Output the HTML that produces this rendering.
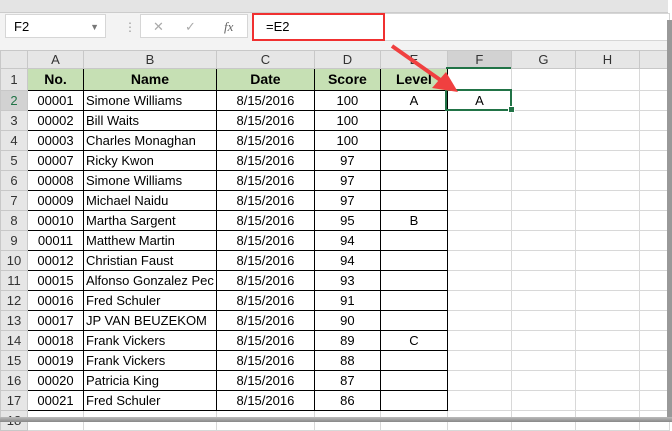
<!DOCTYPE html><html><head><style>
body{margin:0;width:672px;height:422px;overflow:hidden;background:#fff;font-family:"Liberation Sans",Arial,sans-serif;position:relative}
.top{position:absolute;left:0;top:0;width:668px;height:50px;background:#f3f3f3;border-bottom:1px solid #d0d0d0}
.strip{position:absolute;left:0;top:0;width:668px;height:12px;background:#e4e4e4;border-bottom:1px solid #ccc}
.box{position:absolute;background:#fff;border:1px solid #d6d6d6;font-size:13px}
table{position:absolute;left:0;top:50px;border-collapse:collapse;table-layout:fixed}
td{height:19px;border:1px solid #d8d8d8;font-size:13px;padding:0 2px;white-space:nowrap;overflow:hidden;text-align:center;line-height:19px}
tr.h td{height:17px;line-height:17px;background:#e6e6e6;color:#333;border-color:#c8c8c8}
tr.g td{height:21px;line-height:21px}
td.rh{background:#e6e6e6;color:#333;border-color:#c8c8c8;font-size:13px}
.g td.t{background:#c6e0b4;font-weight:bold;font-size:14px}
td.t{border:1px solid #000}
td.l{text-align:left}
.shadow{position:absolute;left:0;top:417px;width:672px;height:5px;background:linear-gradient(#bbb,#888)}
.rshadow{position:absolute;left:667px;top:20px;width:5px;height:402px;background:#999}
</style></head><body>
<div class="top"><div class="strip"></div>
<div class="box" style="left:5px;top:14px;width:101px;height:24px;line-height:24px;padding-left:8px;box-sizing:border-box">F2<span style="position:absolute;right:6px;top:0;font-size:9px;color:#777">▼</span></div>
<div style="position:absolute;left:124px;top:20px;color:#999;font-size:12px">⋮</div>
<div class="box" style="left:140px;top:14px;width:108px;height:24px;color:#aaa;line-height:24px;box-sizing:border-box"><span style="position:absolute;left:12px">✕</span><span style="position:absolute;left:44px">✓</span><span style="position:absolute;left:83px;font-style:italic;font-family:'Liberation Serif',serif;color:#666">fx</span></div>
<div class="box" style="left:252px;top:13px;width:416px;height:26px;border-color:#d6d6d6"></div>
<div style="position:absolute;left:252px;top:13px;height:24px;border:2px solid #f03030;font-size:13px;line-height:24px;padding-left:12px;width:117px">=E2</div>
</div>
<table>
<colgroup><col style="width:27px"><col style="width:56px"><col style="width:132px"><col style="width:98px"><col style="width:66px"><col style="width:67px"><col style="width:64px"><col style="width:64px"><col style="width:64px"><col style="width:30px"></colgroup>
<tr class="h"><td style="background:#e6e6e6"></td><td>A</td><td>B</td><td>C</td><td>D</td><td>E</td><td style="background:#d2d2d2">F</td><td>G</td><td>H</td><td></td></tr>
<tr class="g"><td class="rh">1</td><td class="t">No.</td><td class="t">Name</td><td class="t">Date</td><td class="t">Score</td><td class="t">Level</td><td></td><td></td><td></td><td></td></tr>
<tr><td class="rh" style="color:#217346;background:#d2d2d2">2</td><td class="t">00001</td><td class="t l">Simone Williams</td><td class="t">8/15/2016</td><td class="t">100</td><td class="t">A</td><td>A</td><td></td><td></td><td></td></tr>
<tr><td class="rh">3</td><td class="t">00002</td><td class="t l">Bill Waits</td><td class="t">8/15/2016</td><td class="t">100</td><td class="t"></td><td></td><td></td><td></td><td></td></tr>
<tr><td class="rh">4</td><td class="t">00003</td><td class="t l">Charles Monaghan</td><td class="t">8/15/2016</td><td class="t">100</td><td class="t"></td><td></td><td></td><td></td><td></td></tr>
<tr><td class="rh">5</td><td class="t">00007</td><td class="t l">Ricky Kwon</td><td class="t">8/15/2016</td><td class="t">97</td><td class="t"></td><td></td><td></td><td></td><td></td></tr>
<tr><td class="rh">6</td><td class="t">00008</td><td class="t l">Simone Williams</td><td class="t">8/15/2016</td><td class="t">97</td><td class="t"></td><td></td><td></td><td></td><td></td></tr>
<tr><td class="rh">7</td><td class="t">00009</td><td class="t l">Michael Naidu</td><td class="t">8/15/2016</td><td class="t">97</td><td class="t"></td><td></td><td></td><td></td><td></td></tr>
<tr><td class="rh">8</td><td class="t">00010</td><td class="t l">Martha Sargent</td><td class="t">8/15/2016</td><td class="t">95</td><td class="t">B</td><td></td><td></td><td></td><td></td></tr>
<tr><td class="rh">9</td><td class="t">00011</td><td class="t l">Matthew Martin</td><td class="t">8/15/2016</td><td class="t">94</td><td class="t"></td><td></td><td></td><td></td><td></td></tr>
<tr><td class="rh">10</td><td class="t">00012</td><td class="t l">Christian Faust</td><td class="t">8/15/2016</td><td class="t">94</td><td class="t"></td><td></td><td></td><td></td><td></td></tr>
<tr><td class="rh">11</td><td class="t">00015</td><td class="t l">Alfonso Gonzalez Pec</td><td class="t">8/15/2016</td><td class="t">93</td><td class="t"></td><td></td><td></td><td></td><td></td></tr>
<tr><td class="rh">12</td><td class="t">00016</td><td class="t l">Fred Schuler</td><td class="t">8/15/2016</td><td class="t">91</td><td class="t"></td><td></td><td></td><td></td><td></td></tr>
<tr><td class="rh">13</td><td class="t">00017</td><td class="t l">JP VAN BEUZEKOM</td><td class="t">8/15/2016</td><td class="t">90</td><td class="t"></td><td></td><td></td><td></td><td></td></tr>
<tr><td class="rh">14</td><td class="t">00018</td><td class="t l">Frank Vickers</td><td class="t">8/15/2016</td><td class="t">89</td><td class="t">C</td><td></td><td></td><td></td><td></td></tr>
<tr><td class="rh">15</td><td class="t">00019</td><td class="t l">Frank Vickers</td><td class="t">8/15/2016</td><td class="t">88</td><td class="t"></td><td></td><td></td><td></td><td></td></tr>
<tr><td class="rh">16</td><td class="t">00020</td><td class="t l">Patricia King</td><td class="t">8/15/2016</td><td class="t">87</td><td class="t"></td><td></td><td></td><td></td><td></td></tr>
<tr><td class="rh">17</td><td class="t">00021</td><td class="t l">Fred Schuler</td><td class="t">8/15/2016</td><td class="t">86</td><td class="t"></td><td></td><td></td><td></td><td></td></tr>
<tr><td class="rh">18</td><td></td><td></td><td></td><td></td><td></td><td></td><td></td><td></td><td></td></tr>
</table>
<div style="position:absolute;left:446px;top:67px;width:65px;height:0;border-bottom:2px solid #217346"></div>
<div style="position:absolute;left:445px;top:89px;width:63px;height:18px;border:2px solid #217346"></div>
<div style="position:absolute;left:508px;top:106px;width:5px;height:5px;background:#217346;border:1px solid #fff"></div>
<svg style="position:absolute;left:0;top:0" width="672" height="422"><line x1="392" y1="46" x2="446" y2="84" stroke="#f04040" stroke-width="4"/><polygon points="458,92 432,88 446,72" fill="#f04040"/></svg>
<div class="rshadow"></div><div class="shadow"></div>
</body></html>
